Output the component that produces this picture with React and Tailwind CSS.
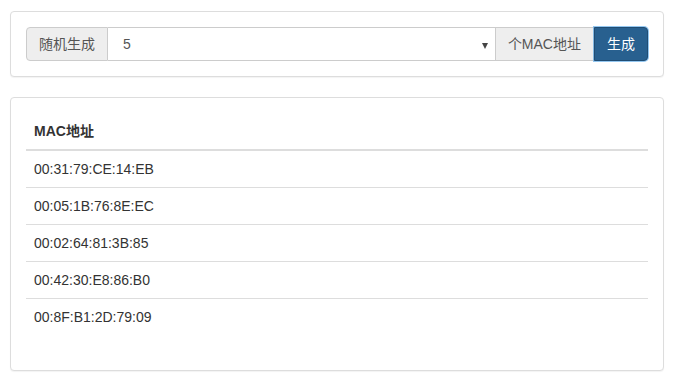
import React, { useState } from 'react';

const randomMac = () => {
  const parts = ['00'];
  for (let i = 0; i < 5; i++) {
    parts.push(Math.floor(Math.random() * 256).toString(16).toUpperCase().padStart(2, '0'));
  }
  return parts.join(':');
};

const App = () => {
  const [count] = useState(5);
  const [macs, setMacs] = useState([
    '00:31:79:CE:14:EB',
    '00:05:1B:76:8E:EC',
    '00:02:64:81:3B:85',
    '00:42:30:E8:86:B0',
    '00:8F:B1:2D:79:09',
  ]);

  const generate = () => {
    setMacs(Array.from({ length: count }, randomMac));
  };

  return (
    <div
      className="min-h-screen bg-white pt-[11px] px-[10px] text-[14px] leading-[20px] text-[#333]"
      style={{ fontFamily: '"Liberation Sans", Arial, "Noto Sans CJK SC", sans-serif' }}
    >
      <div className="bg-white border border-[#ddd] rounded-[4px] shadow-[0_1px_1px_rgba(0,0,0,0.05)] p-[15px]">
        <div className="flex h-[34px]">
          <span className="flex items-center px-[12px] bg-[#eee] border border-[#ccc] rounded-l-[4px] text-[#555]">
            随机生成
          </span>
          <div className="relative flex-1 flex items-center border-y border-[#ccc] bg-white pl-[15px] text-[#555] cursor-pointer">
            {count}
            <span className="absolute right-[7px] top-[15px] w-0 h-0 border-x-[3.5px] border-x-transparent border-t-[6px] border-t-[#444]"></span>
          </div>
          <span className="flex items-center px-[12px] bg-[#eee] border border-[#ccc] text-[#555]">
            个MAC地址
          </span>
          <button
            onClick={generate}
            className="flex items-center px-[12px] bg-[#28608f] border border-[#204d74] rounded-r-[4px] text-white shadow-[0_0_0_1px_rgba(102,175,233,0.7)]"
          >
            生成
          </button>
        </div>
      </div>

      <div className="mt-[20px] bg-white border border-[#ddd] rounded-[4px] shadow-[0_1px_1px_rgba(0,0,0,0.05)] p-[15px]">
        <table className="w-full mb-[20px] border-collapse">
          <thead>
            <tr>
              <th className="text-left font-bold p-[8px] border-b-2 border-[#ddd]">MAC地址</th>
            </tr>
          </thead>
          <tbody>
            {macs.map((mac, i) => (
              <tr key={i}>
                <td className={`p-[8px] ${i > 0 ? 'border-t border-[#ddd]' : ''}`}>{mac}</td>
              </tr>
            ))}
          </tbody>
        </table>
      </div>
    </div>
  );
};

export default App;
